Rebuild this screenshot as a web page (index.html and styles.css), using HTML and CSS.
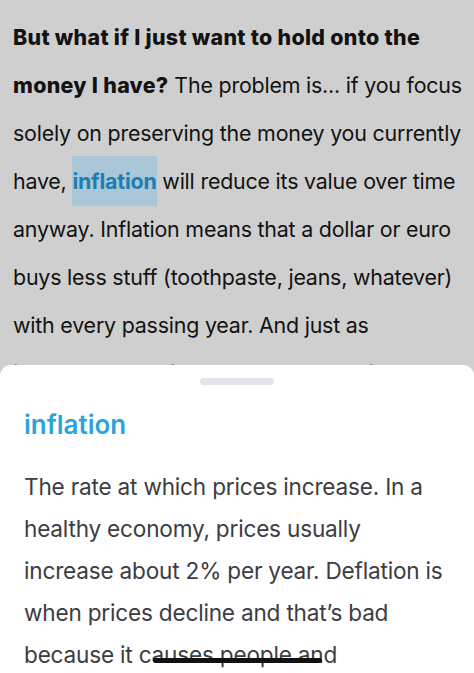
FILE: index.html
```html
<!DOCTYPE html>
<html>
<head>
<meta charset="utf-8">
<link rel="stylesheet" href="styles.css">
</head>
<body>
<main class="article">
<p class="para"><strong>But what if I just want to hold onto the<br>money I have?</strong> The problem is... if you focus<br>solely on preserving the money you currently<br>have, <span class="term">inflation</span> will reduce its value over time<br>anyway. Inflation means that a dollar or euro<br>buys less stuff (toothpaste, jeans, whatever)<br>with every passing year. And just as<br>important, to build wealth you need it to grow</p>
</main>
<section class="sheet">
<div class="handle"></div>
<h2 class="sheet-title">inflation</h2>
<p class="sheet-text">The rate at which prices increase. In a healthy economy, prices usually increase about 2% per year. Deflation is when prices decline and that’s bad because it causes people and businesses to stop spending.</p>
</section>
<div class="home-indicator"></div>
</body>
</html>
```
FILE: styles.css
```css
html, body {
  margin: 0;
  padding: 0;
  height: 673px;
  overflow: hidden;
}
body {
  background: #cfcfcf;
  font-family: Inter, "Noto Sans", sans-serif;
  position: relative;
}
.article {
  padding: 13px 13px 0 13px;
}
.para {
  margin: 0;
  font-size: 21.4px;
  line-height: 48px;
  color: #121212;
  letter-spacing: -0.2px;
  white-space: nowrap;
}
.para strong {
  font-weight: 800;
  letter-spacing: 0.3px;
}
.term {
  background: #a9c7d7;
  color: #1f7db3;
  font-weight: 700;
  padding: 12px 0;
}
.sheet {
  position: absolute;
  left: 0;
  right: 0;
  top: 365px;
  bottom: 0;
  background: #ffffff;
  border-radius: 11px 11px 0 0;
  padding: 13px 24px 0 24px;
  overflow: hidden;
}
.handle {
  width: 74px;
  height: 7px;
  border-radius: 4px;
  background: #e4e4ee;
  margin: 0 auto;
}
.sheet-title {
  margin: 22px 0 0 0;
  font-size: 26px;
  font-weight: 600;
  color: #2aa3dd;
  line-height: 36px;
}
.sheet-text {
  margin: 23px 0 0 0;
  font-size: 22.6px;
  line-height: 42px;
  color: #3c3c41;
  letter-spacing: -0.2px;
}
.home-indicator {
  position: absolute;
  left: 153px;
  width: 169px;
  bottom: 10px;
  height: 5px;
  border-radius: 3px;
  background: #111111;
}
```
